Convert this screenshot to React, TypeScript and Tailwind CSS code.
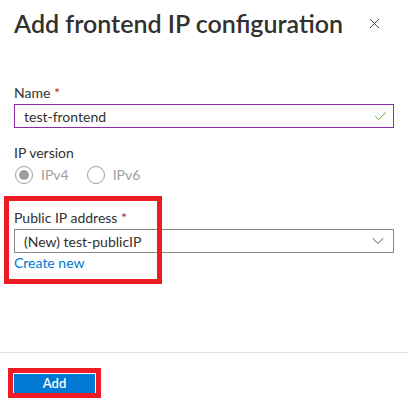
import { Check, ChevronDown, X } from 'lucide-react';

const font = { fontFamily: '"Segoe UI", Lato, "Noto Sans", sans-serif' };

function Req() {
  return <span className="text-[#a4262c]"> *</span>;
}

function Radio({ label, checked }: { label: string; checked?: boolean }) {
  return (
    <div className="flex items-center gap-[8px]">
      <span className="flex h-[18px] w-[18px] items-center justify-center rounded-full border border-[#a19f9d]">
        {checked && <span className="h-[10px] w-[10px] rounded-full bg-[#a19f9d]" />}
      </span>
      <span className="text-[14px] text-[#a19f9d]">{label}</span>
    </div>
  );
}

export default function App() {
  return (
    <div className="relative flex h-[415px] w-[408px] flex-col bg-white text-[#323130]" style={font}>
      <div className="flex h-[42px] items-center justify-between pl-[14px] pr-[25px] pt-[4px]">
        <h1 className="whitespace-nowrap text-[25px] font-semibold leading-[38px]">Add frontend IP configuration</h1>
        <X className="size-[17px] text-[#323130]" strokeWidth={1.2} />
      </div>

      <div className="flex flex-col px-[14px] pt-[41px]">
        <label className="text-[14px] leading-[20px]">
          Name<Req />
        </label>
        <div className="mt-[1px] flex h-[24px] items-center justify-between border border-[#8a2da5] pl-[9px] pr-[5px]">
          <span className="text-[14px]">test-frontend</span>
          <Check className="size-[15px] text-[#57a300]" strokeWidth={1.5} />
        </div>

        <label className="mt-[15px] text-[14px] leading-[20px]">IP version</label>
        <div className="mt-[1px] flex items-center gap-[18px] pl-[1px]">
          <Radio label="IPv4" checked />
          <Radio label="IPv6" />
        </div>

        <label className="mt-[23px] text-[14px] leading-[20px]">
          Public IP address<Req />
        </label>
        <div className="mt-[1px] flex h-[24px] items-center justify-between border border-[#8a8886] pl-[9px] pr-[5px]">
          <span className="text-[14px]">(New) test-publicIP</span>
          <ChevronDown className="size-[20px] text-[#323130]" strokeWidth={1} />
        </div>
        <a className="mt-[1px] text-[14px] leading-[18px] text-[#0078d4]">Create new</a>
      </div>

      <div className="mt-auto border-t border-[#e1dfdd] pb-[21px] pt-[21px] pl-[13px]">
        <button className="flex h-[20px] w-[83px] items-center justify-center border-x border-white bg-[#0078d4] text-[13px] font-semibold text-white">
          Add
        </button>
      </div>

      <div className="pointer-events-none absolute left-[4px] top-[196px] h-[88px] w-[158px] border-[5px] border-[#ed1c24]" />
      <div className="pointer-events-none absolute left-[8px] top-[368px] h-[30px] w-[93px] border-[5px] border-[#ed1c24]" />
    </div>
  );
}
